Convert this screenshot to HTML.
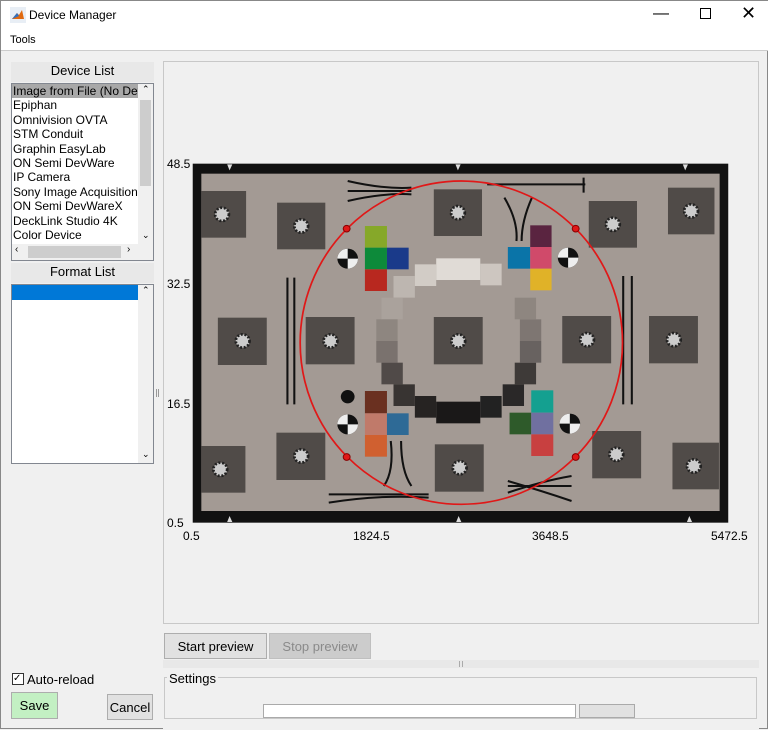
<!DOCTYPE html>
<html><head><style>
*{box-sizing:border-box}
body{margin:0;width:768px;height:729px;background:#f0f0f0;font-family:"Liberation Sans",sans-serif;position:relative;overflow:hidden;border:1px solid #888}
.a{position:absolute}
.t{font-size:12px;color:#000}
.lb div{height:14.4px;line-height:14.4px;font-size:12px;padding-left:1px;white-space:nowrap}
.btn{position:absolute;border:1px solid #adadad;background:#e1e1e1;font-size:13px;text-align:center}
</style></head><body>
<div class="a" style="left:0;top:0;width:768px;height:50px;background:#fff;border-bottom:1px solid #ccc"></div>
<svg class="a" style="left:9px;top:6px" width="16" height="16" viewBox="0 0 16 16"><rect width="16" height="16" fill="#e8eef5"/><path d="M2 12 L7 6 L9 8 L12 3 L14 12 Z" fill="#e06a10"/><path d="M2 12 L7 6 L9 9 Z" fill="#3070c0"/></svg>
<div class="a t" style="left:28px;top:7px">Device Manager</div>
<div class="a" style="left:652px;top:4px;font-size:16px">&#8212;</div>
<div class="a" style="left:699px;top:7px;width:11px;height:11px;border:1px solid #000"></div>
<div class="a" style="left:740px;top:2px;font-size:18px">&#10005;</div>
<div class="a t" style="left:9px;top:33px;font-size:11px">Tools</div>

<div class="a" style="left:10px;top:61px;width:143px;height:20px;background:#e8e8e8;text-align:center;font-size:13px;line-height:18px">Device List</div>
<div class="a" style="left:10px;top:82px;width:143px;height:178px;background:#fff;border:1px solid #828790;overflow:hidden">
<div class="lb" style="width:126px;overflow:hidden">
<div style="background:#a8a8a8">Image from File (No Dev</div><div>Epiphan</div><div>Omnivision OVTA</div><div>STM Conduit</div><div>Graphin EasyLab</div><div>ON Semi DevWare</div><div>IP Camera</div><div>Sony Image Acquisition</div><div>ON Semi DevWareX</div><div>DeckLink Studio 4K</div><div>Color Device</div><div>Mo</div></div>
<div class="a" style="left:126px;top:0;width:15px;height:160px;background:#f0f0f0"></div>
<div class="a" style="left:128px;top:16px;width:11px;height:86px;background:#cdcdcd"></div>
<div class="a" style="left:130px;top:0;font-size:9px">&#8963;</div>
<div class="a" style="left:130px;top:146px;font-size:9px">&#8964;</div>
<div class="a" style="left:0;top:160px;width:141px;height:16px;background:#f0f0f0"></div>
<div class="a" style="left:16px;top:162px;width:93px;height:12px;background:#cdcdcd"></div>
<div class="a" style="left:3px;top:160px;font-size:10px">&lsaquo;</div>
<div class="a" style="left:115px;top:160px;font-size:10px">&rsaquo;</div>
</div>
<div class="a" style="left:10px;top:262px;width:143px;height:20px;background:#e8e8e8;text-align:center;font-size:13px;line-height:18px">Format List</div>
<div class="a" style="left:10px;top:283px;width:143px;height:180px;background:#fff;border:1px solid #828790">
<div class="a" style="left:0;top:0;width:126px;height:15px;background:#0078d7"></div>
<div class="a" style="left:126px;top:0;width:15px;height:178px;background:#f0f0f0"></div>
<div class="a" style="left:130px;top:0;font-size:9px">&#8963;</div>
<div class="a" style="left:130px;top:164px;font-size:9px">&#8964;</div>
</div>
<div class="a" style="left:11px;top:672px;width:12px;height:12px;border:1px solid #333;background:#fff;font-size:10px;line-height:10px">&#10003;</div>
<div class="a t" style="left:26px;top:671px;font-size:13px">Auto-reload</div>
<div class="btn" style="left:10px;top:691px;width:47px;height:27px;background:#c3f0c3;line-height:25px">Save</div>
<div class="btn" style="left:106px;top:693px;width:46px;height:26px;line-height:26px">Cancel</div>

<div class="a" style="left:162px;top:60px;width:596px;height:563px;background:#f0f0f0;border:1px solid #c8c8c8"></div>
<div class="a t" style="left:166px;top:156px">48.5</div>
<div class="a t" style="left:166px;top:276px">32.5</div>
<div class="a t" style="left:166px;top:396px">16.5</div>
<div class="a t" style="left:166px;top:515px">0.5</div>
<div class="a t" style="left:182px;top:528px">0.5</div>
<div class="a t" style="left:352px;top:528px">1824.5</div>
<div class="a t" style="left:531px;top:528px">3648.5</div>
<div class="a t" style="left:710px;top:528px">5472.5</div>
<svg class="a" style="left:190px;top:160px" width="540" height="365" viewBox="0 0 1568 1095" preserveAspectRatio="none">
<rect x="5" y="8" width="1555" height="1077" fill="#111"/>
<rect x="30" y="38" width="1505" height="1012" fill="#a39a94"/>
<g fill="#504b48">
<rect x="30" y="90" width="130" height="140"/><rect x="250" y="125" width="140" height="140"/><rect x="705" y="85" width="140" height="140"/><rect x="1155" y="120" width="140" height="140"/><rect x="1385" y="80" width="135" height="140"/>
<rect x="78" y="470" width="142" height="142"/><rect x="333" y="468" width="142" height="142"/><rect x="705" y="468" width="142" height="142"/><rect x="1078" y="465" width="142" height="142"/><rect x="1330" y="465" width="142" height="142"/>
<rect x="30" y="855" width="128" height="140"/><rect x="248" y="815" width="142" height="142"/><rect x="708" y="850" width="142" height="142"/><rect x="1165" y="810" width="142" height="142"/><rect x="1398" y="845" width="135" height="140"/>
</g>
<g fill="#ccc" stroke="#222" stroke-width="8" stroke-dasharray="6 5">
<circle cx="90" cy="160" r="20"/><circle cx="320" cy="195" r="20"/><circle cx="775" cy="155" r="20"/><circle cx="1225" cy="190" r="20"/><circle cx="1452" cy="150" r="20"/>
<circle cx="150" cy="540" r="20"/><circle cx="405" cy="540" r="20"/><circle cx="776" cy="540" r="20"/><circle cx="1150" cy="536" r="20"/><circle cx="1402" cy="536" r="20"/>
<circle cx="85" cy="925" r="20"/><circle cx="320" cy="885" r="20"/><circle cx="780" cy="920" r="20"/><circle cx="1235" cy="880" r="20"/><circle cx="1460" cy="915" r="20"/>
</g>
<rect x="505" y="195" width="64" height="65" fill="#86a829"/><rect x="505" y="260" width="64" height="65" fill="#0d8a3a"/><rect x="569" y="260" width="63" height="65" fill="#1a3a8a"/><rect x="505" y="325" width="64" height="65" fill="#b8281f"/>
<rect x="985" y="193" width="62" height="65" fill="#5a2440"/><rect x="920" y="258" width="65" height="65" fill="#0a74a8"/><rect x="985" y="258" width="62" height="65" fill="#d04a6a"/><rect x="985" y="323" width="62" height="65" fill="#e0b228"/>
<rect x="505" y="690" width="64" height="67" fill="#6a3020"/><rect x="505" y="757" width="64" height="65" fill="#c07a6a"/><rect x="569" y="757" width="63" height="65" fill="#2e6a96"/><rect x="505" y="822" width="64" height="65" fill="#d06030"/>
<rect x="988" y="688" width="64" height="67" fill="#14a090"/><rect x="925" y="755" width="63" height="65" fill="#2e5a2a"/><rect x="988" y="755" width="64" height="65" fill="#7070a0"/><rect x="988" y="820" width="64" height="65" fill="#c84040"/>
<rect x="588" y="345" width="62" height="65" fill="#bdb6b0"/><rect x="650" y="310" width="62" height="65" fill="#d2ccc6"/><rect x="712" y="292" width="128" height="65" fill="#e0dbd6"/><rect x="840" y="308" width="62" height="65" fill="#cdc6c0"/>
<rect x="553" y="410" width="62" height="65" fill="#aaa29c"/><rect x="538" y="475" width="62" height="65" fill="#8e8680"/><rect x="538" y="540" width="62" height="65" fill="#7a726e"/><rect x="553" y="605" width="62" height="65" fill="#504a48"/><rect x="588" y="670" width="62" height="65" fill="#383432"/><rect x="650" y="705" width="62" height="65" fill="#262322"/><rect x="712" y="722" width="128" height="65" fill="#1a1818"/><rect x="840" y="705" width="62" height="65" fill="#222"/><rect x="905" y="670" width="62" height="65" fill="#2a2828"/><rect x="940" y="605" width="62" height="65" fill="#3e3a38"/><rect x="955" y="540" width="62" height="65" fill="#686260"/><rect x="955" y="475" width="62" height="65" fill="#7e7672"/><rect x="940" y="410" width="62" height="65" fill="#8e8680"/>
<g stroke="#111" stroke-width="6" fill="none">
<path d="M455 60 Q560 85 640 80 M455 90 L640 90 M455 120 Q560 95 640 100"/><path d="M860 70 L1145 70 M1140 50 L1140 95"/><path d="M910 110 Q950 180 945 240 M990 110 Q960 180 960 240"/><path d="M280 350 L280 730 M300 350 L300 730"/><path d="M1255 345 L1255 730 M1280 345 L1280 730"/><path d="M580 840 Q590 930 560 975 M610 840 Q610 930 640 975"/><path d="M400 1000 L690 1000 M400 1025 Q550 1000 690 1010"/><path d="M920 975 L1105 975 M920 995 Q1020 960 1105 945 M920 960 Q1020 990 1105 1020"/>
</g>
<g fill="#111"><circle cx="455" cy="293" r="30"/><circle cx="1095" cy="290" r="30"/><circle cx="455" cy="790" r="30"/><circle cx="1100" cy="788" r="30"/><circle cx="455" cy="707" r="20"/></g>
<g fill="#eee"><path d="M425 293 A30 30 0 0 1 455 263 V293Z M485 293 A30 30 0 0 1 455 323 V293Z"/><path d="M1065 290 A30 30 0 0 1 1095 260 V290Z M1125 290 A30 30 0 0 1 1095 320 V290Z"/><path d="M425 790 A30 30 0 0 1 455 760 V790Z M485 790 A30 30 0 0 1 455 820 V790Z"/><path d="M1070 788 A30 30 0 0 1 1100 758 V788Z M1130 788 A30 30 0 0 1 1100 818 V788Z"/></g>
<g fill="#ddd"><path d="M105 10 L120 10 L112 28Z"/><path d="M768 10 L783 10 L775 28Z"/><path d="M1428 10 L1443 10 L1435 28Z"/><path d="M105 1083 L120 1083 L112 1065Z"/><path d="M770 1083 L785 1083 L777 1065Z"/><path d="M1440 1083 L1455 1083 L1447 1065Z"/></g>
<ellipse cx="785" cy="545" rx="468" ry="485" fill="none" stroke="#e01818" stroke-width="5"/>
<g fill="#e01818" stroke="#800" stroke-width="3"><circle cx="452" cy="203" r="10"/><circle cx="1117" cy="203" r="10"/><circle cx="452" cy="888" r="10"/><circle cx="1117" cy="888" r="10"/></g>
</svg>
<div class="a" style="left:155px;top:388px;width:3px;height:8px;border-left:1px solid #999;border-right:1px solid #999"></div>

<div class="btn" style="left:163px;top:632px;width:103px;height:26px;line-height:25px">Start preview</div>
<div class="btn" style="left:268px;top:632px;width:102px;height:26px;line-height:25px;background:#cccccc;border-color:#bfbfbf;color:#8a8a8a">Stop preview</div>
<div class="a" style="left:162px;top:659px;width:596px;height:8px;background:#e8e8e8"></div>
<div class="a" style="left:458px;top:660px;width:4px;height:6px;border-left:1px solid #aaa;border-right:1px solid #aaa"></div>
<div class="a" style="left:162px;top:668px;width:596px;height:61px;background:#f0f0f0"></div>
<div class="a" style="left:163px;top:676px;width:593px;height:42px;border:1px solid #c8c8c8"></div>
<div class="a" style="left:166px;top:670px;font-size:13px;background:#f0f0f0;padding:0 2px">Settings</div>
<div class="a" style="left:262px;top:703px;width:313px;height:14px;background:#fff;border:1px solid #aaa"></div>
<div class="a" style="left:578px;top:703px;width:56px;height:14px;background:#e1e1e1;border:1px solid #aaa"></div>
</body></html>
